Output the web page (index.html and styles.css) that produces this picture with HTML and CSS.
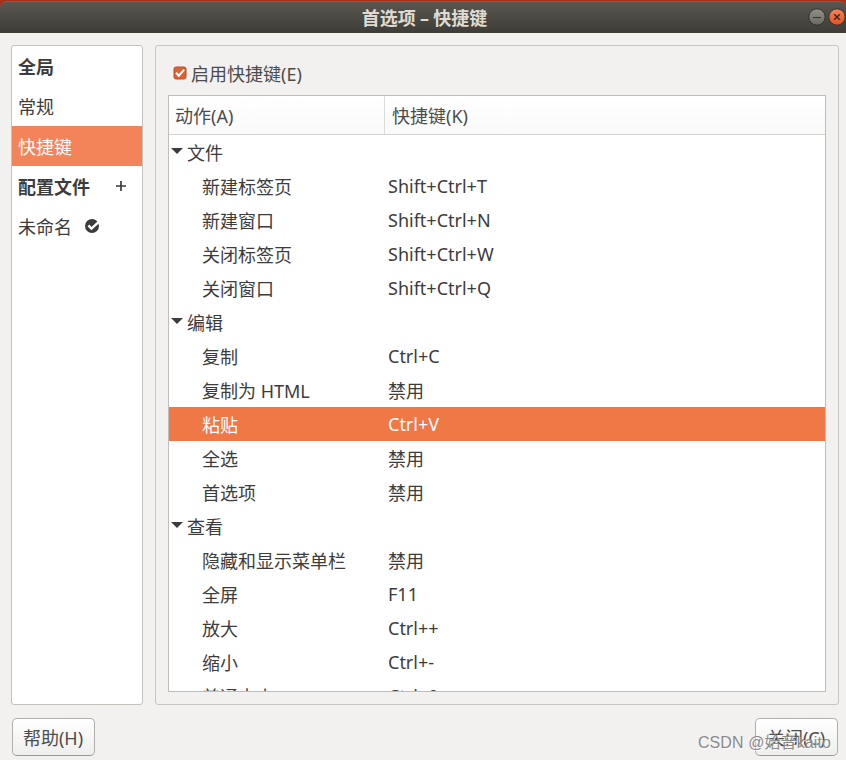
FILE: index.html
```html
<!DOCTYPE html>
<html lang="zh-CN">
<head>
<meta charset="utf-8">
<title>首选项 – 快捷键</title>
<link rel="stylesheet" href="styles.css">
</head>
<body>
<div class="window">
  <header class="titlebar">
    <h1 class="title">首选项 – 快捷键</h1>
    <div class="controls">
      <svg class="control" width="18" height="18" viewBox="0 0 18 18">
        <defs>
          <linearGradient id="grey" x2="0" y2="1"><stop offset="0" stop-color="#92918a"/><stop offset="1" stop-color="#686760"/></linearGradient>
          <linearGradient id="red" x2="0" y2="1"><stop offset="0" stop-color="#f5855c"/><stop offset="1" stop-color="#e4501f"/></linearGradient>
        </defs>
        <circle cx="9" cy="9" r="8.2" fill="url(#grey)" stroke="#33322e"/>
        <path d="M5 9.5h8" stroke="#33322e"/>
      </svg>
      <svg class="control" width="18" height="18" viewBox="0 0 18 18">
        <circle cx="9" cy="9" r="8.2" fill="url(#red)" stroke="#33322e"/>
        <path d="M6.2 6.2l5.6 5.6M11.8 6.2l-5.6 5.6" stroke="#3c2a20" stroke-width="1.5"/>
      </svg>
    </div>
  </header>
  <main class="body">
    <nav class="sidebar">
      <div class="nav-row heading">全局</div>
      <div class="nav-row">常规</div>
      <div class="nav-row selected">快捷键</div>
      <div class="nav-row heading">配置文件
        <svg class="add" width="12" height="12" viewBox="0 0 12 12"><path d="M6 1v10M1 6h10" stroke="#3a3a3a" stroke-width="1.7"/></svg>
      </div>
      <div class="nav-row">未命名
        <svg class="default" width="16" height="16" viewBox="0 0 16 16"><circle cx="8" cy="8" r="7" fill="#3c3c3c"/><path d="M4.4 7.4l3 3.2 8.2-7.4" fill="none" stroke="#fff" stroke-width="2.3"/></svg>
      </div>
    </nav>
    <section class="panel">
      <label class="enable">
        <svg width="14" height="14" viewBox="0 0 14 14"><rect x="1" y="1" width="12" height="12" rx="2" fill="#dc6135" stroke="#bd4d29"/><path d="M3 6.7l2.8 3 5.4-6" fill="none" stroke="#fff" stroke-width="2"/></svg>
        <span>启用快捷键(E)</span>
      </label>
      <div class="tree">
        <div class="tree-head"><div class="col-action">动作(A)</div><div class="col-key">快捷键(K)</div></div>
        <div class="group"><i class="arrow"></i>文件</div>
        <div class="item"><span>新建标签页</span><span class="key">Shift+Ctrl+T</span></div>
        <div class="item"><span>新建窗口</span><span class="key">Shift+Ctrl+N</span></div>
        <div class="item"><span>关闭标签页</span><span class="key">Shift+Ctrl+W</span></div>
        <div class="item"><span>关闭窗口</span><span class="key">Shift+Ctrl+Q</span></div>
        <div class="group"><i class="arrow"></i>编辑</div>
        <div class="item"><span>复制</span><span class="key">Ctrl+C</span></div>
        <div class="item"><span>复制为 HTML</span><span>禁用</span></div>
        <div class="item active"><span>粘贴</span><span class="key">Ctrl+V</span></div>
        <div class="item"><span>全选</span><span>禁用</span></div>
        <div class="item"><span>首选项</span><span>禁用</span></div>
        <div class="group"><i class="arrow"></i>查看</div>
        <div class="item"><span>隐藏和显示菜单栏</span><span>禁用</span></div>
        <div class="item"><span>全屏</span><span class="key">F11</span></div>
        <div class="item"><span>放大</span><span class="key">Ctrl++</span></div>
        <div class="item"><span>缩小</span><span class="key">Ctrl+-</span></div>
        <div class="item"><span>普通大小</span><span class="key">Ctrl+0</span></div>
      </div>
    </section>
  </main>
  <footer class="actions">
    <button class="button">帮助(H)</button>
    <button class="button">关闭(C)</button>
  </footer>
  <div class="watermark">CSDN @始音kaito</div>
</div>
</body>
</html>
```

FILE: styles.css
```css
* { box-sizing: border-box; }
body {
  margin: 0;
  background: #a92f18;
  color: #3c3c3c;
  font: 18px/26px "Noto Sans", "Noto Sans CJK SC", sans-serif;
}
.window {
  position: relative;
  display: flex;
  flex-direction: column;
  height: 760px;
  padding-top: 1px;
  overflow: hidden;
}
.titlebar {
  position: relative;
  flex: none;
  height: 32px;
  border-top: 1px solid #68665d;
  border-radius: 7px 7px 0 0;
  background: linear-gradient(#59574f, #3d3c37);
}
.title {
  margin: 0;
  padding: 3px 0 0 3px;
  text-align: center;
  font-size: 18px;
  line-height: 26px;
  font-weight: 700;
  word-spacing: -0.5px;
  color: #dfdbd2;
}
.controls {
  position: absolute;
  right: 0;
  top: 6px;
  display: flex;
  gap: 2px;
}
.control { display: block; }
.body {
  flex: none;
  display: flex;
  gap: 12px;
  height: 672px;
  padding: 12px 7px 0 11px;
  background: #f2f1ef;
}
.sidebar {
  width: 132px;
  height: 660px;
  border: 1px solid #c4c2bd;
  border-radius: 3px;
  background: #fff;
}
.nav-row {
  display: flex;
  align-items: center;
  height: 40px;
  padding: 2px 0 0 6px;
}
.heading { font-weight: 700; }
.selected { background: #f38459; color: #fff; }
.add { margin: -2px 0 0 25px; }
.default { margin: -3px 0 0 12px; }
.panel {
  flex: 1;
  height: 660px;
  padding: 12px;
  border: 1px solid #c8c6c2;
  border-radius: 3px;
}
.enable {
  display: flex;
  align-items: center;
  gap: 4px;
  height: 31px;
  margin-bottom: 6px;
  padding-left: 5px;
  color: #4c4c4c;
}
.enable svg { margin-top: -2px; }
.tree {
  height: 597px;
  border: 1px solid #bfbdb8;
  background: #fff;
  overflow: hidden;
}
.tree-head {
  display: flex;
  height: 39px;
  border-bottom: 1px solid #d5d3d0;
  background: linear-gradient(#fff, #fafafa);
  line-height: 41px;
  color: #4c4c4c;
}
.col-action {
  width: 216px;
  padding-left: 6px;
  border-right: 1px solid #dddbd8;
}
.col-key { padding-left: 7px; }
.group {
  display: flex;
  align-items: center;
  gap: 4px;
  height: 34px;
  padding: 2px 0 0 2px;
}
.arrow {
  margin-top: -4px;
  border: 6px solid transparent;
  border-top-color: #3c3c3c;
  border-bottom: 0;
}
.item {
  display: grid;
  grid-template-columns: 186px 1fr;
  align-items: center;
  height: 34px;
  padding: 2px 0 0 33px;
}
.key { margin-top: -2px; }
.active { background: #f07746; color: #fff; }
.actions {
  flex: 1;
  display: flex;
  justify-content: space-between;
  padding: 13px 8px 0 12px;
  background: #f2f1ef;
}
.button {
  width: 83px;
  height: 38px;
  padding: 2px 1px 0 0;
  border: 1px solid #b1afab;
  border-bottom-color: #999792;
  border-radius: 5px;
  background: linear-gradient(#fff, #eeeeec);
  color: #4c4c4c;
  font: inherit;
}
.watermark {
  position: absolute;
  right: 15px;
  bottom: 4px;
  font-family: "Liberation Sans", "Noto Sans CJK SC", sans-serif;
  font-size: 16px;
  letter-spacing: 0.1px;
  color: #8b8b8b;
  text-shadow: 1px 1px 0 rgba(255, 255, 255, .7);
}
```
